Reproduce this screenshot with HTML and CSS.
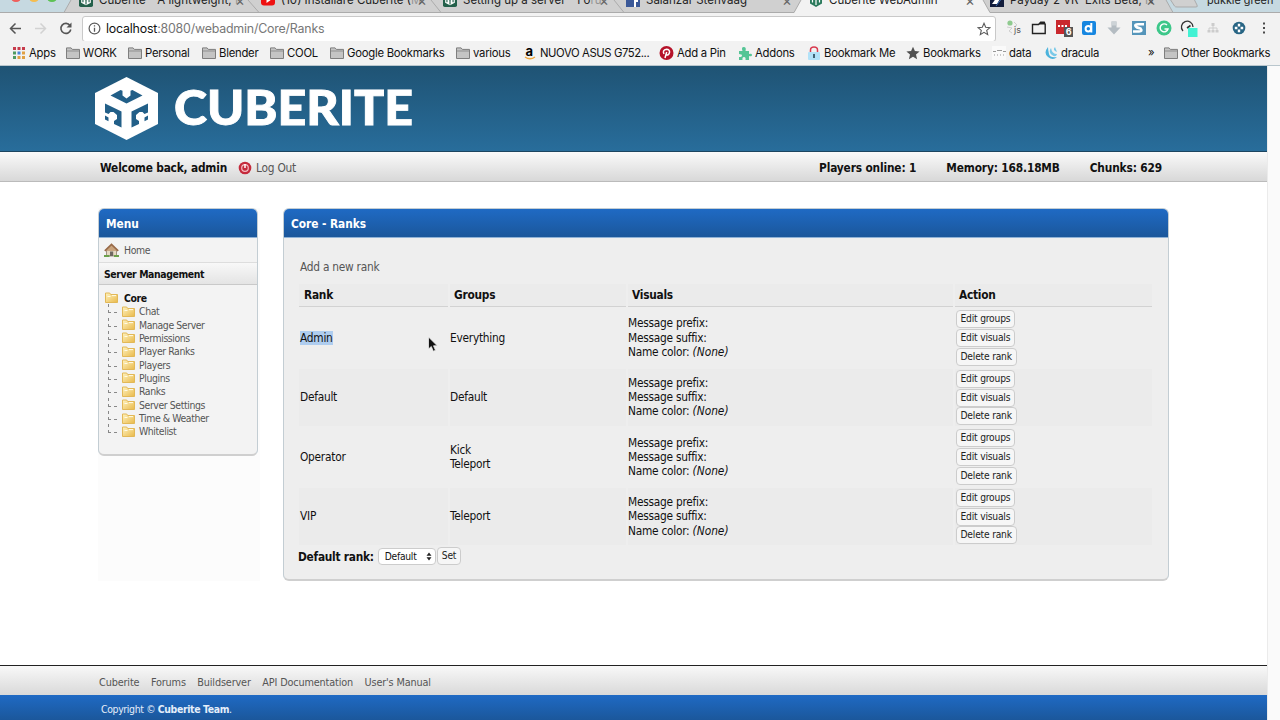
FILE: index.html
```html
<!DOCTYPE html>
<html lang="en">
<head>
  <meta charset="UTF-8">
  <title>Cuberite WebAdmin</title>
  <link rel="stylesheet" href="styles.css">
</head>
<body>
  <svg class="defs" width="0" height="0">
    <defs>
      <linearGradient id="goldFill" x1="0" y1="0" x2="1" y2="1">
        <stop offset="0" stop-color="#fff3c0"/><stop offset="1" stop-color="#e9b94a"/>
      </linearGradient>
      <symbol id="folder" viewBox="0 0 14 12">
        <path d="M.5 11.5V.9h4.6l1.2 1.5h7.2v9.1z" fill="#c4c4c4" stroke="#7e7e7e"/>
        <path d="M1 4h12" stroke="#8f8f8f"/>
      </symbol>
      <symbol id="gold" viewBox="0 0 13 11">
        <path d="M.5 10.5V1h4.2l1 1.5h6.8v8z" fill="url(#goldFill)" stroke="#e2b857"/>
        <path d="M2.5 4.5h3M7 3.6h4" stroke="#fffbe6"/>
      </symbol>
      <symbol id="cube" viewBox="0 0 16 16">
        <rect width="16" height="16" rx="2" fill="#23604a"/>
        <path d="M8 2l5.5 3v6L8 14l-5.5-3V5z" fill="#fff"/>
        <path d="M8 8v5M8 8L4 6M8 8l4-2M4.5 8v2.5M11.5 8v2.5" stroke="#23604a" stroke-width="1.3"/>
      </symbol>
    </defs>
  </svg>

  <div class="tabs">
    <svg class="tab-shapes" width="1280" height="13">
      <path d="M64 13L71 0H1166L1173 13z" fill="#d0d0d0"/>
      <path d="M64 12.5L71 0M248 0L259 12.5M431 0L441 12.5M614 0L624 12.5M1166 0L1173 12.5M0 12.5H794M990 12.5H1280" stroke="#ababab" fill="none"/>
      <path d="M794 13L801 0H983L990 13z" fill="#f2f2f2"/>
      <path d="M794 12.5L801 0M983 0L990 12.5" stroke="#ababab"/>
      <path d="M1170 -1L1174.5 6Q1175 7 1177 7H1196Q1198 7 1197 5L1194 -1" fill="#d0d0d0" stroke="#ababab"/>
      <circle cx="16" cy="-3.5" r="5.5" fill="#ee5f5b"/>
      <circle cx="34" cy="-3.5" r="5.5" fill="#f5bd4f"/>
      <circle cx="52" cy="-3.5" r="5.5" fill="#5dc254"/>
    </svg>
    <div class="tab"><svg width="14" height="14"><use href="#cube"/></svg><span>Cuberite - A lightweight, <i>f</i></span><b>×</b></div>
    <div class="tab"><svg width="14" height="14"><rect y="2" width="14" height="10.5" rx="3" fill="#e11"/><path d="M5.5 4.5l4 2.7-4 2.7z" fill="#fff"/></svg><span>(10) Installare Cuberite (<i>M</i></span><b>×</b></div>
    <div class="tab"><svg width="14" height="14"><use href="#cube"/></svg><span>Setting up a server - Fo<i>ru</i></span><b>×</b></div>
    <div class="tab"><svg width="14" height="14"><rect width="14" height="14" fill="#3b5998"/><path d="M9 14V8h2V6H9V4q0-1 2-1" stroke="#fff" stroke-width="2" fill="none"/></svg><span>Salanzar Stenvaag</span><b>×</b></div>
    <div class="tab"><svg width="14" height="14"><path d="M7 0l6 3.5v7L7 14l-6-3.5v-7z" fill="#2b7a5c"/><path d="M7 6v6M3.5 6v3.5M10.5 6v3.5" stroke="#fff" stroke-width="1.2"/></svg><span>Cuberite WebAdmin</span><b>×</b></div>
    <div class="tab"><svg width="14" height="14"><rect width="14" height="14" fill="#111c3c"/><path d="M2 11h5l4-7H7z" fill="#fff"/><path d="M6 13l6-8" stroke="#3d6fb4"/></svg><span>Payday 2 VR&nbsp; Exits Beta, <i>N</i></span><b>×</b></div>
    <div class="profile">pukkle green</div>
  </div>

  <div class="toolbar">
    <svg class="nav-icons" width="80" height="28">
      <path d="M21 15.5H10.5M15.5 10.5l-5 5 5 5" fill="none" stroke="#555" stroke-width="1.5"/>
      <path d="M35 15.5h10.5M40.5 10.5l5 5-5 5" fill="none" stroke="#d2d2d2" stroke-width="1.5"/>
      <path d="M70 12.5a5 5 0 1 0 .8 4" fill="none" stroke="#555" stroke-width="1.6"/>
      <path d="M71.5 9.5v5h-5z" fill="#555"/>
    </svg>
    <div class="address">
      <svg width="13" height="13"><circle cx="6.5" cy="6.5" r="5.4" fill="none" stroke="#5a5a5a" stroke-width="1.2"/><path d="M6.5 5.8v4M6.5 3.2v1.4" stroke="#5a5a5a" stroke-width="1.3"/></svg>
      <div class="url"><span>localhost</span>:8080/webadmin/Core/Ranks</div>
      <svg width="14" height="14"><path d="M7 1.3l1.7 3.9 4.3.4-3.3 2.8 1 4.2L7 10.4l-3.7 2.2 1-4.2L1 5.6l4.3-.4z" fill="none" stroke="#5a5a5a" stroke-width="1.1"/></svg>
    </div>
    <div class="extensions">
      <svg width="18" height="16"><circle cx="4" cy="3" r="2.6" fill="#8fca8f"/><path d="M1 7l5 1-3 3 3 2M8 2l3 3-3 2" stroke="#cfcfcf" fill="none"/><text x="8" y="12.5" class="js">js</text></svg>
      <svg width="16" height="16"><path d="M1.5 13.500v-9h6l2.200-2.300h3.500l1 2.300v9z" fill="none" stroke="#222" stroke-width="1.4"/><path d="M8 4.500l1.700-2.500h3.500l1 2.500z" fill="#222"/></svg>
      <svg width="18" height="18"><rect width="14" height="14" y="1" fill="#c9292e"/><path d="M2 7h2M5.500 7h2M9 7h2" stroke="#fff" stroke-width="2"/><rect x="8" y="8" width="9" height="10" fill="#555"/><text x="9.7" y="16.3" class="six">6</text></svg>
      <svg width="16" height="16"><rect x="1" y="1" width="14" height="14" rx="2" fill="#1686e0"/><circle cx="7.3" cy="8.8" r="2.7" fill="none" stroke="#fff" stroke-width="2"/><path d="M10.3 3v9.5" stroke="#fff" stroke-width="2"/></svg>
      <svg width="16" height="16"><path d="M5.5 1.500h5v6h4L8 14.500l-6.500-7h4z" fill="#b4bcc2"/><path d="M5.5 1.500h5v4h-5z" fill="#cdd3d7"/></svg>
      <svg width="16" height="16"><rect x="1" y="1" width="14" height="14" fill="#5595ba"/><path d="M13 4.300H7q-3.500 0-2.500 1.700t5 2.500q2.500 3-1.500 3H2" stroke="#fff" stroke-width="2.6" fill="none"/></svg>
      <svg width="16" height="16"><circle cx="8" cy="8" r="7.5" fill="#3dc78a"/><path d="M11 5a4 4 0 1 0 1 4H8.500" stroke="#fff" stroke-width="1.4" fill="none"/></svg>
      <svg width="18" height="18"><path d="M3 12A5.800 5.800 0 1 1 13 8" stroke="#333" stroke-width="1.3" fill="none"/><path d="M7 9l3.500-2.500" stroke="#333" stroke-width="1.6"/><rect x="8" y="9" width="9.5" height="9" fill="#42f2d3"/></svg>
      <svg width="16" height="16"><path d="M8 3v8M4 11V8h8v3" stroke="#ccc" fill="none"/><path d="M6.500 3h3v3h-3zM2.500 10h3v2.500h-3zM6.500 10h3v2.500h-3zM10.500 10h3v2.500h-3z" fill="#ccc"/></svg>
      <svg width="16" height="16"><circle cx="9" cy="8" r="6.3" fill="#286584"/><path d="M9 3.800v2.600M9 9.600v2.600M4.800 8h2.600M10.600 8h2.600" stroke="#fff" stroke-width="2.4"/></svg>
      <svg width="16" height="16"><path d="M9 2.500v2M9 7v2M9 11.500v2" stroke="#4a4a4a" stroke-width="2"/></svg>
    </div>
  </div>

  <div class="bookmarks">
    <div><svg width="14" height="14"><path d="M1 2.500h12" stroke="#c73c4c" stroke-width="3" stroke-dasharray="3 1.5"/><path d="M1 7h3M1 11.500h3" stroke="#4f9b62" stroke-width="3"/><path d="M5.500 7h3" stroke="#4a86d8" stroke-width="3"/><path d="M10 7h3M5.500 11.500h3M10 11.500h3" stroke="#e0a044" stroke-width="3"/></svg>Apps</div>
    <div><svg width="14" height="12"><use href="#folder"/></svg>WORK</div>
    <div><svg width="14" height="12"><use href="#folder"/></svg>Personal</div>
    <div><svg width="14" height="12"><use href="#folder"/></svg>Blender</div>
    <div><svg width="14" height="12"><use href="#folder"/></svg>COOL</div>
    <div><svg width="14" height="12"><use href="#folder"/></svg>Google Bookmarks</div>
    <div><svg width="14" height="12"><use href="#folder"/></svg>various</div>
    <div><svg width="14" height="14"><text x="2.5" y="10" class="amazon">a</text><path d="M2 11q5 3.500 10 0" stroke="#eea63a" fill="none" stroke-width="1.3"/></svg><span class="tight">NUOVO ASUS G752...</span></div>
    <div><svg width="15" height="14"><circle cx="7.5" cy="7" r="7" fill="#b5122a"/><path d="M6 12l1.700-6M5 8Q3 4 7.500 3.300 11 3.500 10.500 6.500 9.500 10 7 8.500" stroke="#fff" stroke-width="1.5" fill="none"/></svg>Add a Pin</div>
    <div><svg width="14" height="14"><path d="M1 5h3.500Q3 1 5.800 1T7.500 5H11v3q3-1 3 1t-3 1v4H7.500q.5-3-1.500-3t-1.500 3H1v-3q3 0 3-1.500T1 8z" fill="#55c596"/></svg>Addons</div>
    <div><svg width="14" height="14"><path d="M3.500 7V4q0-3 3.500-3t3.500 3v2" stroke="#d83a4f" stroke-width="1.5" fill="none"/><rect x="1" y="6" width="12" height="8" rx="1" fill="#b2e2f8"/><path d="M7 8v4" stroke="#356" stroke-width="1.8"/></svg>Bookmark Me</div>
    <div><svg width="14" height="14"><path d="M7 .8l1.900 4.300 4.700.4L10 8.600l1.100 4.600L7 10.700l-4.100 2.500L4 8.600.4 5.500l4.700-.4z" fill="#505050"/></svg>Bookmarks</div>
    <div><svg width="14" height="14"><rect width="14" height="14" fill="#fafafa"/><path d="M1 5.500h3M5 4.500h5M11 5.500h3M2 9h1M5 9h1M8 9h1M11 9h1" stroke="#999"/></svg>data</div>
    <div><svg width="14" height="14"><path d="M4 1Q-1 7 4 11t9 0Q6 12 5 8T4 1z" fill="#4cb3dc"/><path d="M7 2Q4 6 8 9t5-1Q8 8 7 2zM11 1q-3 3 2 5" fill="#79c9e8"/></svg>dracula</div>
    <div class="more">»</div>
    <div><svg width="14" height="12"><use href="#folder"/></svg>Other Bookmarks</div>
  </div>

  <div class="viewport">
    <div class="page">
      <header>
        <svg class="logo" width="330" height="76" viewBox="0 0 330 76">
          <path d="M31.5 6L63 22V53L31.5 69 0 53V22z" fill="#fff"/>
          <g fill="#225f88">
            <path d="M15.5 24.500L25.500 19 27.500 19.800V24.500L31.500 27.500 35.500 24.500V19.800L37.500 19 47.500 24.500 31.500 32.500z"/>
            <path d="M10 32.500L26.500 40.500V56.500L19 53V50L22 48V44L18.500 41H15.500L13.500 43 10 41.500z"/>
            <path d="M10 44.500L13.500 46.500V50.300L10 48.600z"/>
            <path d="M53 32.500L36.500 40.500V56.500L44 53V50L41 48V44L44.500 41H47.500L49.500 43 53 41.500z"/>
            <path d="M53 44.500L49.500 46.500V50.300L53 48.600z"/>
          </g>
          <text x="79" y="54" textLength="239" lengthAdjust="spacingAndGlyphs">CUBERITE</text>
        </svg>
      </header>

      <div class="welcome">
        <strong>Welcome back, admin</strong>
        <svg width="14" height="14"><circle cx="7" cy="7" r="6.3" fill="#c52a3c"/><circle cx="7" cy="7" r="3.3" fill="none" stroke="#f4bcc3" stroke-width="1.2"/><path d="M7 3v4" stroke="#fff" stroke-width="1.5"/></svg>
        <a>Log Out</a>
        <ul class="stats">
          <li>Players online: 1</li>
          <li>Memory: 168.18MB</li>
          <li>Chunks: 629</li>
        </ul>
      </div>

      <div class="content">
        <aside>
          <div class="panel menu">
            <h2>Menu</h2>
            <div class="home">
              <svg width="15" height="14"><path d="M2.500 7h10v6h-10z" fill="#e6d9c3" stroke="#8d7f6d" stroke-width=".8"/><path d="M.8 7.800L7.500 1.500l6.700 6.300" fill="#c9a37c" stroke="#986a48" stroke-width="1.7"/><path d="M6 8.500h3.200V13H6z" fill="#6e6862"/><path d="M0 13h5.500M10 13h5" stroke="#6ba04a" stroke-width="2"/></svg>
              Home
            </div>
            <h3>Server Management</h3>
            <div class="tree">
              <div class="root"><svg width="13" height="11"><use href="#gold"/></svg>Core</div>
              <ul>
                <li><svg width="13" height="11"><use href="#gold"/></svg>Chat</li>
                <li><svg width="13" height="11"><use href="#gold"/></svg>Manage Server</li>
                <li><svg width="13" height="11"><use href="#gold"/></svg>Permissions</li>
                <li><svg width="13" height="11"><use href="#gold"/></svg>Player Ranks</li>
                <li><svg width="13" height="11"><use href="#gold"/></svg>Players</li>
                <li><svg width="13" height="11"><use href="#gold"/></svg>Plugins</li>
                <li><svg width="13" height="11"><use href="#gold"/></svg>Ranks</li>
                <li><svg width="13" height="11"><use href="#gold"/></svg>Server Settings</li>
                <li><svg width="13" height="11"><use href="#gold"/></svg>Time &amp; Weather</li>
                <li><svg width="13" height="11"><use href="#gold"/></svg>Whitelist</li>
              </ul>
            </div>
          </div>
        </aside>

        <main class="panel">
          <h2>Core - Ranks</h2>
          <div class="body">
            <a class="add">Add a new rank</a>
            <table>
              <colgroup><col class="c-rank"><col class="c-groups"><col class="c-visuals"><col class="c-action"></colgroup>
              <tr><th>Rank</th><th>Groups</th><th>Visuals</th><th>Action</th></tr>
              <tr>
                <td><mark>Admin</mark></td>
                <td>Everything</td>
                <td>Message prefix:<br>Message suffix:<br>Name color: <em>(None)</em></td>
                <td><button>Edit groups</button><button>Edit visuals</button><button>Delete rank</button></td>
              </tr>
              <tr>
                <td>Default</td>
                <td>Default</td>
                <td>Message prefix:<br>Message suffix:<br>Name color: <em>(None)</em></td>
                <td><button>Edit groups</button><button>Edit visuals</button><button>Delete rank</button></td>
              </tr>
              <tr>
                <td>Operator</td>
                <td>Kick<br>Teleport</td>
                <td>Message prefix:<br>Message suffix:<br>Name color: <em>(None)</em></td>
                <td><button>Edit groups</button><button>Edit visuals</button><button>Delete rank</button></td>
              </tr>
              <tr>
                <td>VIP</td>
                <td>Teleport</td>
                <td>Message prefix:<br>Message suffix:<br>Name color: <em>(None)</em></td>
                <td><button>Edit groups</button><button>Edit visuals</button><button>Delete rank</button></td>
              </tr>
            </table>
            <div class="default-rank">
              <strong>Default rank:</strong>
              <div class="select">Default<svg width="6" height="9"><path d="M.5 3.700L3 .5l2.500 3.200zM.5 5.300L3 8.500l2.500-3.200z" fill="#222"/></svg></div>
              <button>Set</button>
            </div>
          </div>
        </main>
      </div>

      <footer>
        <nav><a>Cuberite</a><a>Forums</a><a>Buildserver</a><a>API Documentation</a><a>User's Manual</a></nav>
        <div class="copyright">Copyright © <strong>Cuberite Team</strong>.</div>
      </footer>
    </div>
    <div class="scrollbar"></div>
  </div>

  <svg class="cursor" width="12" height="18"><path d="M1.500 1v12l2.800-2.500 2 4.800 2.200-1-2-4.500h3.800z" fill="#111" stroke="#eee" stroke-width=".8"/></svg>
</body>
</html>
```
FILE: styles.css
```css
* {
  box-sizing: border-box;
}
body {
  margin: 0;
  height: 720px;
  overflow: hidden;
  display: flex;
  flex-direction: column;
  background: #fff;
  font-family: "DejaVu Sans Condensed", "DejaVu Sans", sans-serif;
  font-stretch: condensed;
  font-size: 11.8px;
  letter-spacing: -0.25px;
  color: #111;
}
svg {
  flex: none;
  display: block;
}
.defs {
  position: absolute;
}
ul {
  list-style: none;
  margin: 0;
  padding: 0;
}

/* browser */
.tabs, .toolbar, .bookmarks {
  font-family: Inter, sans-serif;
  font-stretch: normal;
  letter-spacing: 0;
}
.tabs {
  position: relative;
  height: 13px;
  overflow: hidden;
  display: grid;
  grid-template-columns: 182px 182px 183px 183px 181px 183px 90px;
  grid-template-rows: 13px;
  align-items: end;
  padding-left: 79px;
  background: #c6d9e1;
}
.tab-shapes {
  position: absolute;
  left: 0;
  top: 0;
}
.tab, .profile {
  position: relative;
  height: 26px;
  display: flex;
  align-items: center;
  font-size: 11.5px;
  color: #222;
  white-space: nowrap;
}
.tab span {
  margin-left: 6px;
  width: 136px;
}
.tab i {
  font-style: normal;
  opacity: 0.35;
}
.tab b {
  font-weight: normal;
  font-size: 15px;
  color: #666;
}
.profile {
  padding-left: 34px;
  font-size: 10.8px;
}
.toolbar {
  height: 28px;
  display: flex;
  background: #f2f2f2;
}
.nav-icons {
  margin-right: 2px;
}
.address {
  width: 917px;
  height: 26px;
  margin-top: 3px;
  padding: 0 4px 1px 5px;
  display: flex;
  align-items: center;
  background: #fff;
  border: 1px solid #c9c9c9;
  border-radius: 3px;
}
.url {
  flex: 1;
  margin-left: 5px;
  font-size: 12.4px;
  letter-spacing: -0.2px;
  color: #777;
}
.url span {
  color: #111;
}
.extensions {
  display: grid;
  grid-template-columns: repeat(11, 24.9px);
  align-items: center;
  padding: 2px 0 0 10px;
}
.js {
  font-size: 9px;
  fill: #555;
}
.six {
  font: bold 9px Inter, sans-serif;
  fill: #fff;
}
.amazon {
  font: bold 13px Inter, sans-serif;
}
.bookmarks {
  height: 25px;
  display: grid;
  grid-template-columns: 54px 62px 74px 68px 60px 126px 67px 136px 79px 69px 99px 86px 52px 104px 16px 116px;
  padding-left: 12px;
  background: #f2f2f2;
  font-size: 11.3px;
  letter-spacing: -0.25px;
  white-space: nowrap;
  border-bottom: 1px solid #b9c6cd;
}
.bookmarks div {
  display: flex;
  align-items: center;
  gap: 3px;
}
.bookmarks .tight {
  letter-spacing: -0.4px;
}
.bookmarks .more {
  align-items: flex-start;
  padding-top: 4px;
}

/* page */
.viewport {
  flex: 1;
  display: flex;
}
.page {
  width: 1267px;
  display: flex;
  flex-direction: column;
}
.scrollbar {
  flex: 1;
  background: #fafafa;
  border-left: 1px solid #ebebeb;
}
header {
  height: 86px;
  padding: 5px 0 0 95px;
  background: linear-gradient(#1f5374, #286d9b);
  border-bottom: 1px solid #1c4560;
}
.logo text {
  font: 900 47px Lato, sans-serif;
  fill: #fff;
  stroke: #fff;
  stroke-width: 0.9px;
  letter-spacing: 0;
}
.welcome {
  height: 30px;
  padding: 2px 105px 0 100px;
  display: flex;
  align-items: center;
  background: linear-gradient(#fafafa, #d8d8d8);
  border-bottom: 1px solid #bbb;
}
.welcome strong {
  letter-spacing: -0.18px;
}
.welcome svg {
  margin: 0 4px 0 11px;
}
a {
  color: #555;
}
.stats {
  margin-left: auto;
  display: flex;
  gap: 30px;
  font-weight: bold;
  letter-spacing: -0.15px;
}
.content {
  flex: 1;
  display: flex;
  align-items: flex-start;
  gap: 23px;
  padding: 26px 0 0 98px;
}
aside {
  width: 162px;
  height: 373px;
  background: #fcfcfc;
}
.panel {
  border: 1px solid #c3cdd3;
  border-bottom: 2px solid #cfcfcf;
  border-radius: 6px;
  background: #f3f3f3;
}
.panel h2 {
  margin: 0;
  height: 29px;
  padding: 2px 7px 0;
  display: flex;
  align-items: center;
  border-radius: 5px 5px 0 0;
  border-bottom: 1px solid #8fb2d6;
  background: linear-gradient(#1f6ac4, #1b579b);
  color: #fff;
  font-size: 11.8px;
  letter-spacing: -0.05px;
}
.menu {
  width: 160px;
  height: 248px;
}
.home {
  height: 24px;
  display: flex;
  align-items: center;
  gap: 5px;
  padding-left: 5px;
  font-size: 10.4px;
  letter-spacing: -0.4px;
  color: #555;
}
.menu h3 {
  margin: 0;
  height: 23px;
  line-height: 22px;
  padding-left: 5px;
  font-size: 10.4px;
  letter-spacing: -0.4px;
  border-top: 1px solid #ddd;
  border-bottom: 1px solid #c9c9c9;
  background: linear-gradient(#f8f8f8, #e4e4e4);
}
.tree {
  padding-top: 6px;
  font-size: 10.4px;
  letter-spacing: -0.4px;
}
.root {
  height: 13.5px;
  display: flex;
  align-items: center;
  gap: 6px;
  padding-left: 6px;
  font-weight: bold;
}
.tree li {
  height: 13.36px;
  display: flex;
  align-items: center;
  gap: 4.5px;
  margin-left: 9px;
  color: #555;
}
.tree li::before {
  content: "";
  width: 8px;
  height: 8px;
  margin: -5px 0 0;
  border-left: 1px dashed #888;
  border-bottom: 1px dashed #888;
}
main.panel {
  width: 886px;
  height: 373px;
  background: #eee;
}
.body {
  padding: 22px 0 0 13px;
}
.add {
  display: block;
  height: 22px;
  margin-left: 3px;
  line-height: 14px;
}
table {
  width: 857px;
  table-layout: fixed;
  border-spacing: 2px;
}
.c-rank { width: 149px; }
.c-groups { width: 176px; }
.c-visuals { width: 325px; }
.c-action { width: 197px; }
th {
  height: 23px;
  padding: 0 4px;
  text-align: left;
  background: #ebebeb;
  border-bottom: 1px solid #d2d2d2;
}
th:first-child {
  padding-left: 5px;
}
td {
  height: 57.6px;
  padding: 0;
  line-height: 14.2px;
}
td:first-child {
  padding-left: 1px;
}
td:last-child {
  padding: 1px 0 0 0.5px;
}
tr:nth-child(odd) td {
  background: #ebebeb;
}
em {
  letter-spacing: 0;
}
mark {
  background: #afcdef;
  color: inherit;
}
button {
  display: block;
  height: 18px;
  margin: 0 0 0.7px;
  padding: 0 4px;
  font: inherit;
  font-size: 10.2px;
  letter-spacing: -0.2px;
  line-height: 16px;
  color: #222;
  background: #f6f6f6;
  border: 1px solid #ccc;
  border-radius: 4px;
}
.default-rank {
  display: flex;
  align-items: center;
  margin-left: 1px;
}
.select {
  width: 58px;
  height: 17px;
  margin: 0 1px 0 4px;
  padding: 0 3px 0 6px;
  display: flex;
  align-items: center;
  justify-content: space-between;
  font-size: 10.2px;
  background: #fff;
  border: 1px solid #ccc;
  border-radius: 4px;
}
footer nav {
  height: 30px;
  padding: 3px 0 0 99px;
  display: flex;
  align-items: center;
  gap: 11.5px;
  font-size: 10.8px;
  letter-spacing: -0.15px;
  border-top: 1px solid #222;
  background: linear-gradient(#f8f8f8, #d9d9d9);
}
.copyright {
  height: 25px;
  padding: 1px 0 0 101px;
  line-height: 27px;
  font-size: 10.4px;
  letter-spacing: -0.35px;
  color: #e4eefa;
  background: linear-gradient(#1f6ac4, #1b579b);
}
.cursor {
  position: absolute;
  left: 427px;
  top: 336px;
}
```
